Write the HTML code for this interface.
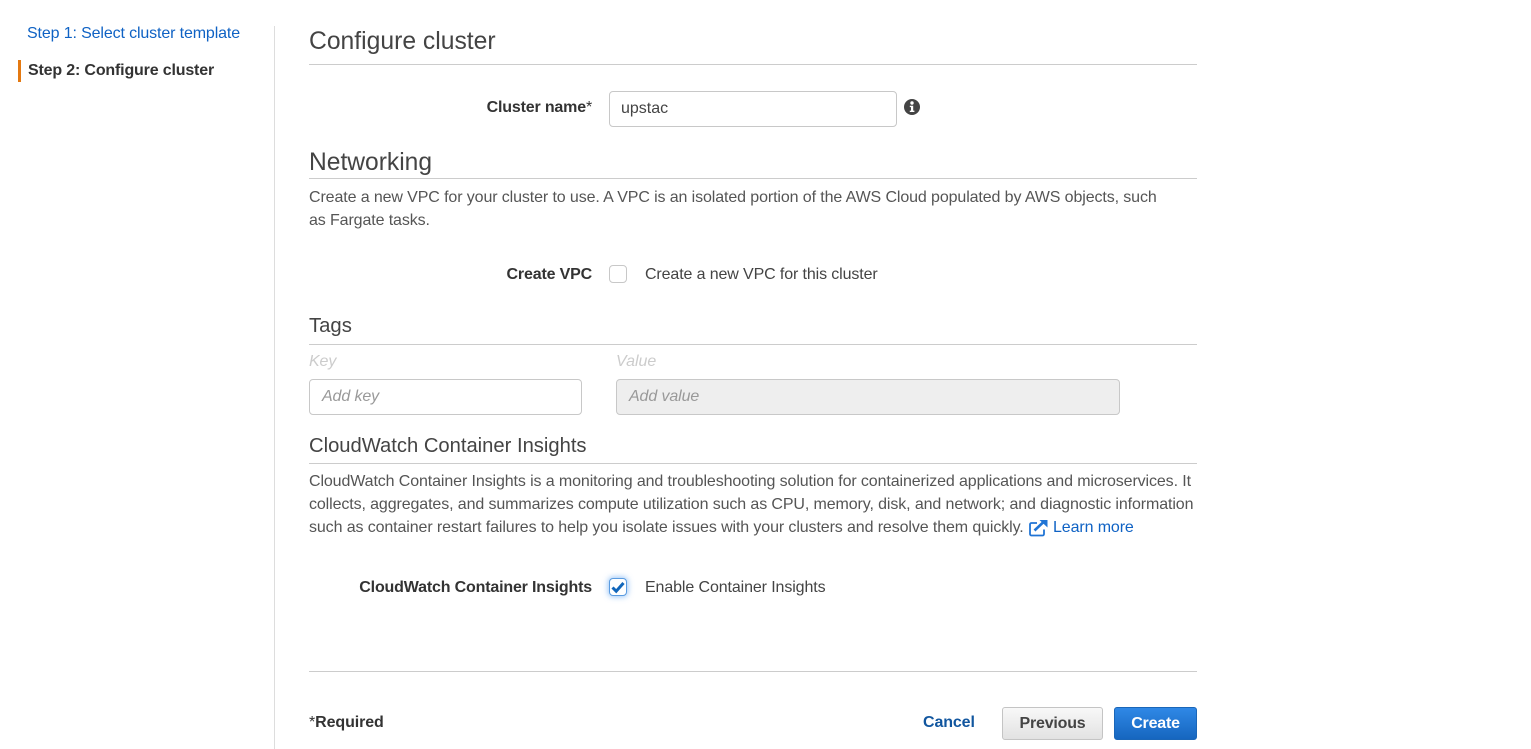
<!DOCTYPE html>
<html lang="en">
<head>
<meta charset="utf-8">
<title>Configure cluster</title>
<style>
html,body{margin:0;padding:0;background:#fff}
body{position:relative;width:1531px;height:749px;overflow:hidden;font-family:"Liberation Sans",Arial,sans-serif;font-size:16px;color:#444;letter-spacing:-.11px}
.t{position:absolute;white-space:nowrap;line-height:20px}
.r{text-align:right}
.b{font-weight:700;color:#333;letter-spacing:-.17px}
.h{position:absolute;height:1px;background:#ccc}
.link{color:#0f62c4}
.box{position:absolute;box-sizing:border-box;border:1px solid #c8c8c8;border-radius:4px;background:#fff}
.p{color:#555}
.btn{position:absolute;box-sizing:border-box;border-radius:3px;text-align:center;font-weight:700;line-height:31px;height:33px;letter-spacing:-.2px}
</style>
</head>
<body>
<div class="t link" style="left:27px;top:24px;letter-spacing:-.13px">Step 1: Select cluster template</div>
<div style="position:absolute;left:18px;top:60px;width:3px;height:22px;background:#e47911"></div>
<div class="t b" style="left:28px;top:61px">Step 2: Configure cluster</div>
<div style="position:absolute;left:274px;top:26px;width:1px;height:723px;background:#ddd"></div>

<div class="t" style="left:309px;top:28px;font-size:24.7px;line-height:28px;letter-spacing:0">Configure cluster</div>
<div class="h" style="left:309px;top:64px;width:888px"></div>

<div class="t b r" style="left:392px;width:200px;top:98px">Cluster name<span style="font-weight:400">*</span></div>
<div class="box" style="left:609px;top:91px;width:288px;height:36px"></div>
<div class="t" style="left:621px;top:99px;letter-spacing:0">upstac</div>
<svg style="position:absolute;left:904px;top:99px" width="16" height="16" viewBox="0 0 16 16"><circle cx="8" cy="8" r="8" fill="#444"/><circle cx="8" cy="4" r="1.7" fill="#fff"/><path d="M5.8 6.7H9.2V11.6H10.4V13H5.8V11.6H7V8.1H5.8Z" fill="#fff"/></svg>

<div class="t" style="left:309px;top:149px;font-size:24.6px;line-height:28px;letter-spacing:0">Networking</div>
<div class="h" style="left:309px;top:178px;width:888px"></div>
<div class="t p" style="left:309px;top:186px;line-height:23px">Create a new VPC for your cluster to use. A VPC is an isolated portion of the AWS Cloud populated by AWS objects, such<br>as Fargate tasks.</div>

<div class="t b r" style="left:392px;width:200px;top:265px">Create VPC</div>
<div class="box" style="left:609px;top:265px;width:18px;height:18px"></div>
<div class="t" style="left:645px;top:265px;letter-spacing:-.12px">Create a new VPC for this cluster</div>

<div class="t" style="left:309px;top:316px;font-size:20.3px;line-height:20px;letter-spacing:0">Tags</div>
<div class="h" style="left:309px;top:344px;width:888px"></div>
<div class="t" style="left:309px;top:352px;font-style:italic;color:#ccc">Key</div>
<div class="t" style="left:616px;top:352px;font-style:italic;color:#ccc;letter-spacing:0">Value</div>
<div class="box" style="left:309px;top:379px;width:273px;height:36px"></div>
<div class="t" style="left:322px;top:387px;font-style:italic;color:#999">Add key</div>
<div class="box" style="left:616px;top:379px;width:504px;height:36px;background:#eee"></div>
<div class="t" style="left:629px;top:387px;font-style:italic;color:#999">Add value</div>

<div class="t" style="left:309px;top:436px;font-size:20.2px;line-height:20px;letter-spacing:0">CloudWatch Container Insights</div>
<div class="h" style="left:309px;top:463px;width:888px"></div>
<div class="t p" style="left:309px;top:470px;line-height:23px">CloudWatch Container Insights is a monitoring and troubleshooting solution for containerized applications and microservices. It<br>collects, aggregates, and summarizes compute utilization such as CPU, memory, disk, and network; and diagnostic information<br>such as container restart failures to help you isolate issues with your clusters and resolve them quickly.</div>
<svg style="position:absolute;left:1029px;top:519px" width="19" height="18" viewBox="0 0 19 18" fill="none"><path d="M15 10.5V15a1.5 1.5 0 0 1-1.5 1.5H2.5A1.5 1.5 0 0 1 1 15V5.5A1.5 1.5 0 0 1 2.5 4H8" stroke="#2074d5" stroke-width="1.8"/><path d="M5.5 11.5L14.5 3" stroke="#2074d5" stroke-width="2.6"/><path d="M10.5 1H18.5V8.5Z" fill="#2074d5"/></svg>
<div class="t link" style="left:1053px;top:518px">Learn more</div>

<div class="t b r" style="left:292px;width:300px;top:578px">CloudWatch Container Insights</div>
<div class="box" style="left:609px;top:578px;width:18px;height:18px;border-color:#5a9be0;box-shadow:0 0 6px 1px rgba(70,150,240,.55)"></div>
<svg style="position:absolute;left:611px;top:580px" width="14" height="14" viewBox="0 0 14 14"><path d="M1.5 7.5L5.2 11.2L12.5 3" fill="none" stroke="#1166bb" stroke-width="3"/></svg>
<div class="t" style="left:645px;top:578px">Enable Container Insights</div>

<div class="h" style="left:309px;top:671px;width:888px"></div>
<div class="t b" style="left:309px;top:713px;letter-spacing:-.1px"><span style="font-weight:400">*</span>Required</div>
<div class="t link" style="left:923px;top:713px;font-weight:700;color:#11569f">Cancel</div>
<div class="btn" style="left:1002px;top:707px;width:101px;border:1px solid #c4c4c4;background:linear-gradient(#f8f8f8,#e2e2e2);color:#444">Previous</div>
<div class="btn" style="left:1114px;top:707px;width:83px;border:1px solid #1a66b8;background:linear-gradient(#2f88e6,#1666bf);color:#fff">Create</div>
</body>
</html>
